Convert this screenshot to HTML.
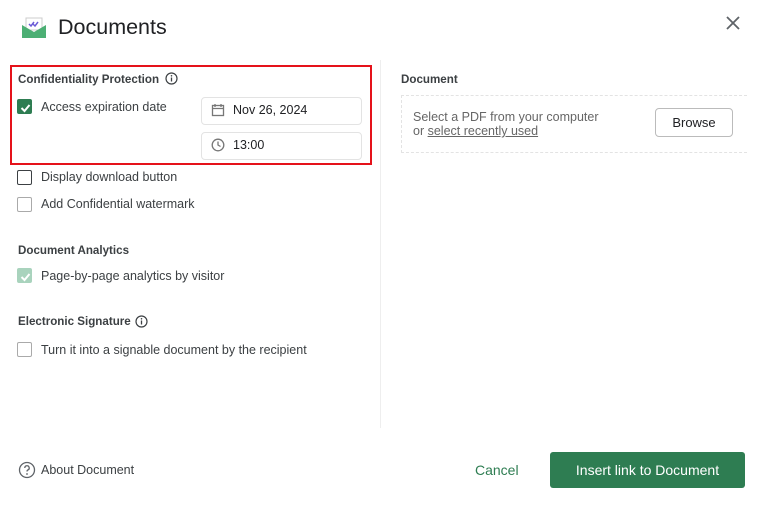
<!DOCTYPE html>
<html><head><style>
body{margin:0;width:768px;height:505px;background:#fff;font-family:"Liberation Sans",sans-serif;color:#3c4043;position:relative;overflow:hidden}
.a{position:absolute}
.t{font-size:12.5px;color:#3c4043}
.h{font-size:11.6px;font-weight:bold;color:#3c4043}
.cb{position:absolute;width:13px;height:13px;border:1.5px solid #5f6368;border-radius:2px}
.in{position:absolute;border:1px solid #e3e3e3;border-radius:4px;left:201px;width:159px;height:26px}
</style></head><body>
<svg class="a" style="left:20px;top:16px" width="28" height="24" viewBox="0 0 28 24">
<rect x="6" y="2" width="16" height="12" fill="#fff" stroke="#ccc"/>
<path d="M9 8l2 2 3-4M13 8l2 2 3-4" stroke="#6b5bd6" stroke-width="1.5" fill="none"/>
<path d="M2 9 L14 16 L26 9 V22 H2Z" fill="#4caf74"/>
</svg>
<div class="a" style="left:58px;top:15px;font-size:21.5px;color:#202124">Documents</div>
<svg class="a" style="left:726px;top:16px" width="14" height="14"><path d="M1 1L13 13M13 1L1 13" stroke="#5f6368" stroke-width="1.8"/></svg>

<div class="a" style="left:10px;top:65px;width:358px;height:96px;border:2px solid #e5121a"></div>
<div class="a h" style="left:18px;top:73px">Confidentiality Protection</div>
<svg class="a" style="left:165px;top:72px" width="13" height="13"><circle cx="6.5" cy="6.5" r="5.5" fill="none" stroke="#3c4043" stroke-width="1.2"/><path d="M6.5 5.5v4" stroke="#3c4043" stroke-width="1.3"/><circle cx="6.5" cy="3.8" r=".8" fill="#3c4043"/></svg>
<div class="cb" style="left:17px;top:99px;background:#2e7d52;border-color:#2e7d52"></div>
<svg class="a" style="left:18px;top:100px" width="15" height="15"><path d="M3.5 8l3 3 5-6" stroke="#fff" stroke-width="2" fill="none"/></svg>
<div class="a t" style="left:41px;top:100px">Access expiration date</div>
<div class="in" style="top:97px"></div>
<svg class="a" style="left:211px;top:103px" width="14" height="14"><rect x="1.5" y="2.5" width="11" height="10" fill="none" stroke="#777" stroke-width="1.3"/><path d="M1.5 5.5h11M4 1v3M10 1v3" stroke="#777" stroke-width="1.3"/></svg>
<div class="a t" style="left:233px;top:103px;color:#202124">Nov 26, 2024</div>
<div class="in" style="top:132px"></div>
<svg class="a" style="left:211px;top:138px" width="14" height="14"><circle cx="7" cy="7" r="5.8" fill="none" stroke="#777" stroke-width="1.3"/><path d="M7 3.5V7l2.5 1.5" stroke="#777" stroke-width="1.3" fill="none"/></svg>
<div class="a t" style="left:233px;top:138px;color:#202124">13:00</div>

<div class="cb" style="left:17px;top:170px;border-color:#3c4043"></div>
<div class="a t" style="left:41px;top:170px">Display download button</div>
<div class="cb" style="left:17px;top:197px;border-color:#aaa"></div>
<div class="a t" style="left:41px;top:197px">Add Confidential watermark</div>

<div class="a h" style="left:18px;top:244px">Document Analytics</div>
<div class="cb" style="left:17px;top:268px;background:#a9d3bd;border-color:#a9d3bd"></div>
<svg class="a" style="left:18px;top:269px" width="15" height="15"><path d="M3.5 8l3 3 5-6" stroke="#fff" stroke-width="2" fill="none"/></svg>
<div class="a t" style="left:41px;top:269px">Page-by-page analytics by visitor</div>

<div class="a h" style="left:18px;top:315px">Electronic Signature</div>
<svg class="a" style="left:135px;top:315px" width="13" height="13"><circle cx="6.5" cy="6.5" r="5.5" fill="none" stroke="#3c4043" stroke-width="1.2"/><path d="M6.5 5.5v4" stroke="#3c4043" stroke-width="1.3"/><circle cx="6.5" cy="3.8" r=".8" fill="#3c4043"/></svg>
<div class="cb" style="left:17px;top:342px;border-color:#aaa"></div>
<div class="a t" style="left:41px;top:343px">Turn it into a signable document by the recipient</div>

<div class="a" style="left:380px;top:60px;width:1px;height:368px;background:#eee"></div>

<div class="a h" style="left:401px;top:73px">Document</div>
<div class="a" style="left:401px;top:95px;width:345px;height:56px;border:1px dashed #e3e3e3;border-right:none"></div>
<div class="a t" style="left:413px;top:110px;color:#666;line-height:14px">Select a PDF from your computer<br>or <u>select recently used</u></div>
<div class="a" style="left:655px;top:108px;width:76px;height:27px;border:1px solid #bbb;border-radius:4px;font-size:13px;color:#202124;text-align:center;line-height:27px">Browse</div>

<svg class="a" style="left:18px;top:461px" width="18" height="18"><circle cx="9" cy="9" r="7.5" fill="none" stroke="#5f6368" stroke-width="1.3"/><path d="M6.8 7a2.2 2.2 0 1 1 3 2c-.6.3-.8.7-.8 1.5" stroke="#5f6368" stroke-width="1.3" fill="none"/><circle cx="9" cy="13" r=".9" fill="#5f6368"/></svg>
<div class="a t" style="left:41px;top:463px">About Document</div>
<div class="a" style="left:475px;top:462px;font-size:14px;color:#2e7d52">Cancel</div>
<div class="a" style="left:550px;top:452px;width:195px;height:36px;background:#2e7d52;border-radius:3px;color:#fff;font-size:14px;text-align:center;line-height:36px">Insert link to Document</div>
</body></html>
